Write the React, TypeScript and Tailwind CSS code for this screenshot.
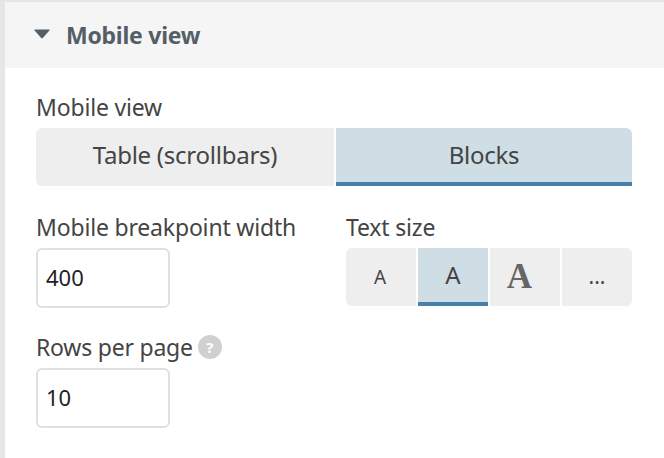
import { ReactNode } from "react";

function Label({ children }: { children: ReactNode }) {
  return <div className="h-[40px] pb-[2px] flex items-center text-[23px] leading-none tracking-[-0.18px] text-[#444444]">{children}</div>;
}

function NumberField({ value }: { value: string }) {
  return (
    <div className="w-[134px] h-[60px] pb-[2px] flex items-center pl-[8px] border-2 border-[#e0e0e0] rounded-[6px] bg-white text-[22px] text-[#222222]">
      {value}
    </div>
  );
}

export default function App() {
  return (
    <div className="w-[664px] h-[458px] overflow-hidden bg-white border-l-[5px] border-t-2 border-[#e6e6e6] font-['Noto_Sans','Open_Sans',sans-serif]">
      {/* Section header */}
      <div className="h-[66px] bg-[#f5f5f5] flex items-center pl-[29px] gap-[16px]">
        <svg width="16" height="10" viewBox="0 0 16 10" className="mb-[2px]">
          <path d="M1 0.5 H15 Q16 0.5 15.4 1.5 L8.8 9 Q8 9.8 7.2 9 L0.6 1.5 Q0 0.5 1 0.5 Z" fill="#545e66" />
        </svg>
        <span className="text-[23px] font-bold tracking-[-0.25px] text-[#545e66]">Mobile view</span>
      </div>

      <div className="pl-[31px] pr-[32px] pt-[20px]">
        <Label>Mobile view</Label>
        <div className="flex gap-[2px] h-[58px] text-[24px] tracking-[-0.25px] text-[#444444]">
          <div className="w-[298px] bg-[#eeeeee] rounded-l-[6px] pb-[5px] flex items-center justify-center">Table (scrollbars)</div>
          <div className="w-[296px] bg-[#cfdde5] rounded-tr-[6px] border-b-4 border-[#4581ab] pb-[1px] flex items-center justify-center">Blocks</div>
        </div>

        <div className="flex mt-[22px]">
          <div className="w-[310px]">
            <Label>Mobile breakpoint width</Label>
            <NumberField value="400" />
          </div>
          <div className="w-[286px]">
            <Label>Text size</Label>
            <div className="flex gap-[2px] h-[58px] text-[#444444]">
              <div className="w-[70px] bg-[#eeeeee] rounded-l-[6px] pr-[2px] flex items-center justify-center text-[19px]">A</div>
              <div className="w-[70px] bg-[#cfdde5] border-b-4 border-[#4581ab] flex items-center justify-center text-[24px]">A</div>
              <div className="w-[70px] bg-[#eeeeee] pr-[11px] flex items-center justify-center text-[35px] font-bold font-['Liberation_Serif',serif] text-[#666666]">A</div>
              <div className="w-[70px] bg-[#eeeeee] rounded-r-[6px] flex items-center justify-center text-[21px]">...</div>
            </div>
          </div>
        </div>

        <div className="mt-[20px] pb-[2px] flex items-center gap-[5px] h-[40px]">
          <span className="text-[23px] leading-none tracking-[-0.22px] text-[#444444]">Rows per page</span>
          <span className="w-[24px] h-[24px] rounded-full bg-[#d0d0d0] text-white text-[15px] font-bold flex items-center justify-center">?</span>
        </div>
        <NumberField value="10" />
      </div>
    </div>
  );
}
